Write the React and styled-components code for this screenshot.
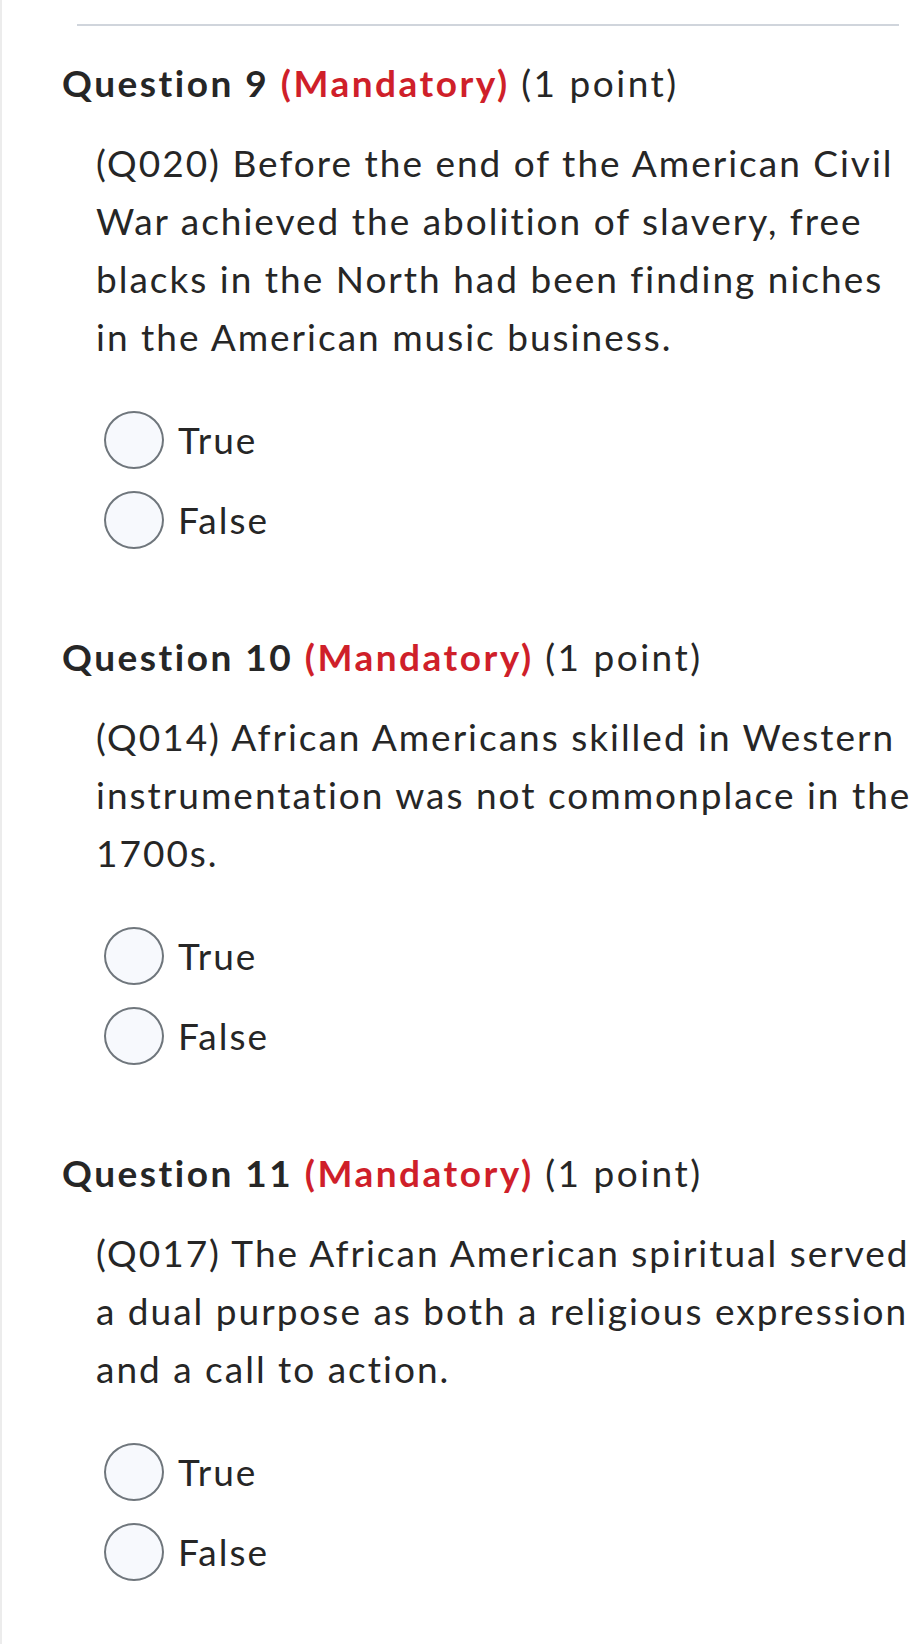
import styled, { createGlobalStyle } from 'styled-components'

const GlobalStyle = createGlobalStyle`
	html, body {
		margin: 0;
		padding: 0;
		background: #ffffff;
		overflow-x: hidden;
	}
	body {
		font-family: Lato, "Open Sans", "Liberation Sans", sans-serif;
		color: #262626;
	}
`

const Page = styled.div`
	min-height: 1644px;
	border-left: 2px solid #ececec;
	box-sizing: border-box;
	padding-top: 24px;
`

const Divider = styled.hr`
	margin: 0 15px 0 75px;
	border: none;
	height: 2px;
	background: #d0d5dc;
`

const Section = styled.section`
	padding-top: ${(props) => (props.first ? '28px' : '68px')};
`

const Title = styled.h2`
	margin: 0;
	padding-left: 60px;
	font-size: 37px;
	line-height: 58px;
	font-weight: 700;
	letter-spacing: 2.5px;
	color: #262626;
	white-space: nowrap;
`

const Mandatory = styled.span`
	color: #cf1f2a;
`

const Points = styled.span`
	font-weight: 400;
`

const Prompt = styled.p`
	margin: 22px -2px 0 0;
	padding-left: 94px;
	font-size: 37px;
	line-height: 58px;
	font-weight: 400;
	letter-spacing: 2px;
	font-variant-ligatures: none;
`

const Options = styled.div`
	margin-top: 34px;
	padding-left: 102px;
	display: flex;
	flex-direction: column;
`

const Option = styled.label`
	display: flex;
	align-items: center;
	gap: 14px;
	height: 80px;
	font-size: 37px;
	line-height: 58px;
	letter-spacing: 2px;
	cursor: pointer;
`

const Radio = styled.span`
	width: 60px;
	height: 58px;
	box-sizing: border-box;
	border: 2px solid #6f767c;
	border-radius: 50%;
	background: #f7f9fd;
	flex-shrink: 0;
`

const questions = [
	{
		number: 9,
		text: '(Q020) Before the end of the American Civil War achieved the abolition of slavery, free blacks in the North had been finding niches in the American music business.',
	},
	{
		number: 10,
		text: '(Q014) African Americans skilled in Western instrumentation was not commonplace in the 1700s.',
	},
	{
		number: 11,
		text: '(Q017) The African American spiritual served a dual purpose as both a religious expression and a call to action.',
	},
]

const App = () => {
	return (
		<Page>
			<GlobalStyle />
			<Divider />
			{questions.map((q, i) => (
				<Section key={q.number} first={i === 0}>
					<Title>
						Question {q.number} <Mandatory>(Mandatory)</Mandatory> <Points>(1 point)</Points>
					</Title>
					<Prompt>{q.text}</Prompt>
					<Options>
						<Option><Radio />True</Option>
						<Option><Radio />False</Option>
					</Options>
				</Section>
			))}
		</Page>
	)
}

export default App
